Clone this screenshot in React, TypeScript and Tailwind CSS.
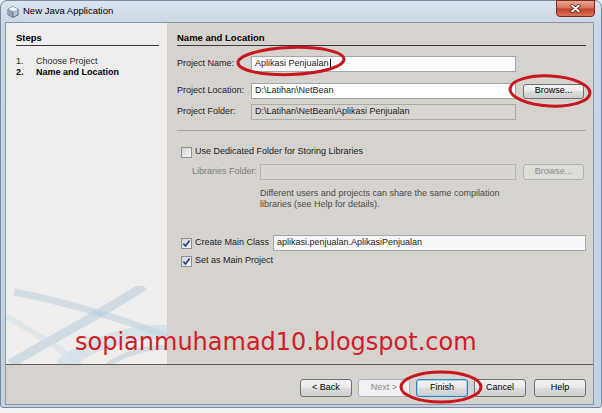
import React from "react";

function Check({ checked }: { checked?: boolean }) {
  return (
    <span className="w-[11px] h-[11px] border border-[#8e8f8f] bg-[linear-gradient(135deg,#d2d2d2,#f8f8f8)] flex items-center justify-center shrink-0">
      {checked && (
        <svg width="9" height="9" viewBox="0 0 9 9">
          <path d="M1.4 4.6 L3.5 7 L7.6 1.6" fill="none" stroke="#243f80" strokeWidth="1.7" />
        </svg>
      )}
    </span>
  );
}

function Btn({ children, kind }: { children: React.ReactNode; kind?: "disabled" | "default" }) {
  if (kind === "disabled") {
    return (
      <div className="w-[52px] h-[18px] rounded-[3px] border border-[#b0b4b8] bg-[#f1f1f1] text-[#8a8a8a] flex items-center justify-center">
        {children}
      </div>
    );
  }
  if (kind === "default") {
    return (
      <div className="w-[52px] h-[18px] rounded-[3px] border border-[#3c7fb1] shadow-[inset_0_0_0_1px_#9fd2f0] bg-[linear-gradient(180deg,#f2f2f2_0%,#ebebeb_45%,#dddddd_50%,#cfcfcf_100%)] text-black flex items-center justify-center">
        {children}
      </div>
    );
  }
  return (
    <div className="w-[52px] h-[18px] rounded-[3px] border border-[#707070] bg-[linear-gradient(180deg,#f2f2f2_0%,#ebebeb_45%,#dddddd_50%,#cfcfcf_100%)] text-black flex items-center justify-center">
      {children}
    </div>
  );
}

function Cube() {
  return (
    <svg width="12" height="12" viewBox="0 0 12 12">
      <path d="M6 0.7 L11 3 L11 9 L6 11.3 L1 9 L1 3 Z" fill="#b9c8d8" stroke="#47586e" strokeWidth="0.9" />
      <path d="M1 3 L6 5.2 L11 3 L6 0.7 Z" fill="#eef3f8" />
      <path d="M1 3 L6 5.2 L6 11.3 L1 9 Z" fill="#8fa4bc" />
      <path d="M6 5.2 L6 11.3" stroke="#47586e" strokeWidth="0.6" />
    </svg>
  );
}

function Swoosh() {
  return (
    <svg className="absolute left-0 bottom-0" width="161" height="78" viewBox="0 0 161 78">
      <path d="M8 6 C 50 14, 110 30, 165 52" fill="none" stroke="#bcd4e3" strokeWidth="7" opacity="0.6" />
      <path d="M138 0 C 105 22, 55 48, 4 78" fill="none" stroke="#b0cadc" strokeWidth="9" opacity="0.5" />
      <path d="M55 80 C 85 55, 130 44, 170 46" fill="none" stroke="#c2d8e6" strokeWidth="14" opacity="0.5" />
      <path d="M0 30 C 30 48, 55 62, 75 80" fill="none" stroke="#cfe0eb" strokeWidth="6" opacity="0.55" />
      <path d="M100 80 C 120 66, 145 60, 165 62" fill="none" stroke="#a8c5d9" strokeWidth="5" opacity="0.45" />
    </svg>
  );
}

export default function App() {
  return (
    <div className="relative w-[602px] h-[413px] overflow-hidden bg-[#f2f2f2] font-['Liberation_Sans',Arial,sans-serif] text-[9px] text-[#1b1b1b]">
      <div className="relative flex flex-col w-[602px] h-[408px] rounded-t-[7px] rounded-b-[3px] border border-[#7a8a9e] bg-[linear-gradient(180deg,#dbe5ef_0px,#cad6e3_22px,#c4d1df_100%)]">
        {/* title bar */}
        <div className="h-[21px] shrink-0 flex items-center pl-[6px]">
          <Cube />
          <span className="ml-[4px] text-[9.5px] text-black">New Java Application</span>
        </div>
        <div className="absolute left-[555px] top-[-1px] w-[39px] h-[17px] rounded-b-[4px] border border-[#7a2a1f] bg-[linear-gradient(180deg,#e9a899_0%,#d8735d_45%,#c2432b_55%,#d9745a_100%)] flex items-center justify-center">
          <svg width="11" height="9" viewBox="0 0 11 9">
            <path d="M2 1.5 L9 7.5 M9 1.5 L2 7.5" stroke="#5a1a10" strokeWidth="3.2" strokeLinecap="round" />
            <path d="M2 1.5 L9 7.5 M9 1.5 L2 7.5" stroke="#ffffff" strokeWidth="1.8" strokeLinecap="round" />
          </svg>
        </div>

        {/* content */}
        <div className="flex-1 ml-[4px] mr-[7px] mb-[2px] border border-[#8796a8] flex flex-col bg-[#d6d3ce]">
          <div className="h-[341px] flex">
            {/* left steps panel */}
            <div className="relative w-[161px] h-full bg-[#efeeec] pl-[10px] pr-[8px] pt-[8px]">
              <div className="h-[15px] border-b border-[#3a3a3a] font-bold text-[9.5px] leading-[13px] text-black">Steps</div>
              <div className="mt-[10px] leading-[11px]">
                <div className="flex text-[#2a2a2a]">
                  <span className="w-[20px]">1.</span>
                  <span>Choose Project</span>
                </div>
                <div className="flex font-bold text-black">
                  <span className="w-[20px]">2.</span>
                  <span>Name and Location</span>
                </div>
              </div>
              <Swoosh />
            </div>

            {/* right panel */}
            <div className="flex-1 h-full bg-[#d6d3ce] pl-[10px] pr-[7px] pt-[8px] flex flex-col">
              <div className="h-[15px] border-b border-[#3a3a3a] font-bold text-[9.5px] leading-[13px] text-black">Name and Location</div>

              <div className="mt-[10px] h-[16px] flex items-center">
                <span className="w-[74px]">Project Name:</span>
                <div className="w-[265px] h-[16px] border border-[#a3a6ad] bg-[#fbfbfb] flex items-center pl-[3px]">
                  Aplikasi Penjualan<span className="ml-[1px] w-px h-[10px] bg-black"></span>
                </div>
              </div>

              <div className="mt-[11px] h-[16px] flex items-center">
                <span className="w-[74px]">Project Location:</span>
                <div className="w-[265px] h-[16px] border border-[#a3a6ad] bg-white flex items-center pl-[3px]">D:\Latihan\NetBean</div>
                <div className="ml-[7px] w-[61px] h-[15px] rounded-[3px] border border-[#707070] bg-[linear-gradient(180deg,#f2f2f2_0%,#ebebeb_45%,#dddddd_50%,#cfcfcf_100%)] flex items-center justify-center text-black">Browse...</div>
              </div>

              <div className="mt-[5px] h-[16px] flex items-center">
                <span className="w-[74px]">Project Folder:</span>
                <div className="w-[265px] h-[16px] border border-[#a9aaad] bg-[#d9d6d1] flex items-center pl-[3px]">D:\Latihan\NetBean\Aplikasi Penjualan</div>
              </div>

              <div className="mt-[10px] border-t border-[#a8a5a0]"></div>

              <div className="mt-[14px] h-[14px] flex items-center pl-[4px]">
                <Check />
                <span className="ml-[3px]">Use Dedicated Folder for Storing Libraries</span>
              </div>

              <div className="mt-[5px] h-[16px] flex items-center pl-[15px]">
                <span className="w-[68px] text-[#7d7d7d]">Libraries Folder:</span>
                <div className="w-[256px] h-[16px] border border-[#b3b3b3] bg-[#d9d6d1]"></div>
                <div className="ml-[7px] w-[61px] h-[16px] rounded-[3px] border border-[#adb2b5] bg-[#dedcd8] flex items-center justify-center text-[#8a8a8a]">Browse...</div>
              </div>

              <div className="mt-[8px] pl-[83px] leading-[11px] text-[#4a4a4a]">
                <div>Different users and projects can share the same compilation</div>
                <div>libraries (see Help for details).</div>
              </div>

              <div className="mt-[25px] h-[16px] flex items-center pl-[4px]">
                <Check checked />
                <span className="ml-[3px]">Create Main Class</span>
                <div className="ml-[4px] flex-1 h-[16px] border border-[#a3a6ad] bg-[#f7f7f7] flex items-center pl-[3px]">aplikasi.penjualan.AplikasiPenjualan</div>
              </div>

              <div className="mt-[3px] h-[14px] flex items-center pl-[4px]">
                <Check checked />
                <span className="ml-[3px]">Set as Main Project</span>
              </div>
            </div>
          </div>

          <div className="border-t border-[#5e5e5e]"></div>

          {/* bottom bar */}
          <div className="h-[39px] bg-[#d6d3ce] flex justify-end items-start pt-[14px] pr-[7px] gap-[6px]">
            <Btn>&lt; Back</Btn>
            <Btn kind="disabled">Next &gt;</Btn>
            <Btn kind="default">Finish</Btn>
            <Btn>Cancel</Btn>
            <div className="ml-[2px]">
              <Btn>Help</Btn>
            </div>
          </div>
        </div>
      </div>

      {/* watermark text */}
      <div className="absolute left-[75px] top-[327px] font-['DejaVu_Sans',sans-serif] text-[24px] leading-[30px] text-[#d01d27]">
        sopianmuhamad10.blogspot.com
      </div>

      {/* red annotation ellipses */}
      <svg className="absolute left-0 top-0 pointer-events-none" width="602" height="413" viewBox="0 0 602 413">
        <ellipse cx="291" cy="61" rx="53" ry="13.5" transform="rotate(-2 291 61)" fill="none" stroke="#c8161f" strokeWidth="3" />
        <ellipse cx="550" cy="91" rx="40" ry="15" transform="rotate(3 550 91)" fill="none" stroke="#c8161f" strokeWidth="3" />
        <ellipse cx="441" cy="387" rx="40" ry="15" fill="none" stroke="#c8161f" strokeWidth="3" />
      </svg>
    </div>
  );
}
